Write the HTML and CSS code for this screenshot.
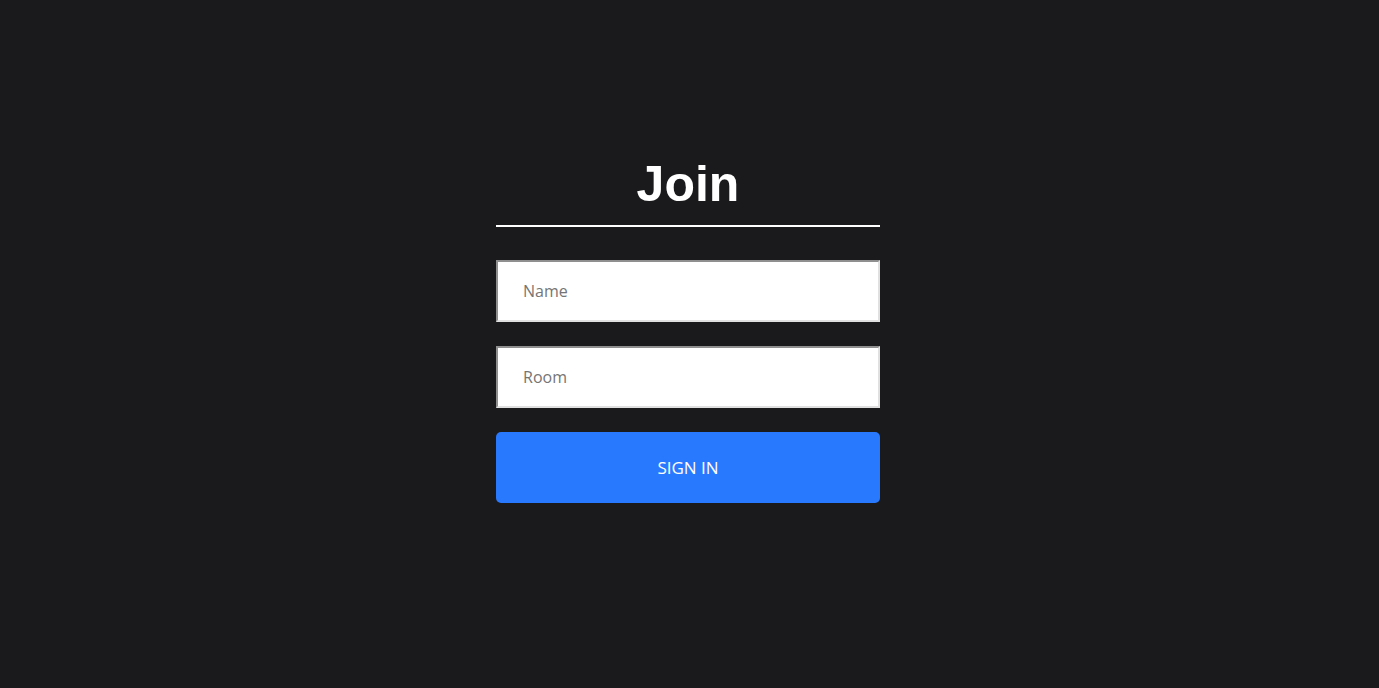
FILE: index.html
```html
<!DOCTYPE html>
<html lang="en">
<head>
<meta charset="utf-8">
<title>Join</title>
<link rel="stylesheet" href="styles.css">
</head>
<body>
<main class="outer">
  <div class="join">
    <h1 class="heading">Join</h1>
    <form class="form">
      <input class="field" type="text" placeholder="Name">
      <input class="field" type="text" placeholder="Room">
      <button class="btn" type="button">SIGN IN</button>
    </form>
  </div>
</main>
</body>
</html>
```

FILE: styles.css
```css
html, body {
  margin: 0;
  padding: 0;
  background: #1a1a1d;
  height: 100%;
}
.outer {
  display: flex;
  justify-content: center;
  padding-top: 154px;
  padding-right: 3px;
}
.join {
  width: 384px;
  display: flex;
  flex-direction: column;
}
.heading {
  margin: 0;
  color: #ffffff;
  font-family: "Liberation Sans", Arial, sans-serif;
  font-weight: bold;
  font-size: 50px;
  line-height: 60px;
  text-align: center;
  padding-bottom: 11px;
  border-bottom: 2px solid #ffffff;
}
.form {
  display: flex;
  flex-direction: column;
  gap: 24px;
  margin-top: 33px;
}
.field {
  box-sizing: border-box;
  height: 62px;
  width: 100%;
  margin: 0;
  padding: 0 25px;
  border-style: solid;
  border-width: 2px;
  border-color: #8f8f8f #e0e0e0 #e0e0e0 #8f8f8f;
  background: #ffffff;
  font-family: "Open Sans", sans-serif;
  font-size: 16px;
  color: #333;
  outline: none;
}
.field::placeholder {
  color: #757575;
}
.btn {
  height: 71px;
  width: 100%;
  margin: 0;
  border: none;
  border-radius: 5px;
  background: #2979ff;
  color: #ffffff;
  font-family: "Open Sans", sans-serif;
  font-size: 17px;
  padding: 0;
  cursor: pointer;
}
```
